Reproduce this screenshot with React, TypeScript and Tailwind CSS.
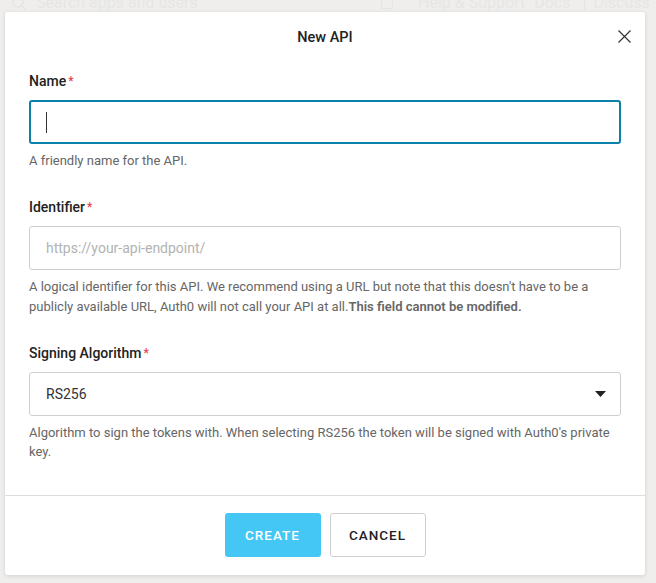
import React from 'react';

const font = { fontFamily: 'Roboto, "Liberation Sans", sans-serif' };

function Label({ children }: { children: React.ReactNode }) {
  return (
    <label className="block text-[14px] leading-5 font-medium text-[#222] mb-[9px]">
      {children}
      <span className="text-[#e5424d] ml-[2px] align-top text-[12px]">*</span>
    </label>
  );
}

function Help({ children }: { children: React.ReactNode }) {
  return <p className="mt-[7px] text-[13px] leading-5 text-[#666]">{children}</p>;
}

export default function App() {
  return (
    <div className="relative w-[656px] h-[583px] overflow-hidden bg-[#efeeed]" style={font}>
      {/* faded page behind the dialog */}
      <div className="flex items-center w-[720px] h-[12px] text-[16px] text-[#e7e6e4] -mt-[3px] whitespace-nowrap">
        <svg width="16" height="16" viewBox="0 0 16 16" className="ml-[11px] mr-[9px] shrink-0" fill="none" stroke="#e5e4e2" strokeWidth="1.5">
          <circle cx="7" cy="7" r="5" />
          <path d="M11 11l4 4" />
        </svg>
        <span className="w-[345px] shrink-0">Search apps and users</span>
        <span className="w-[12px] h-[12px] border border-[#e5e4e2] rounded-t-full shrink-0" />
        <span className="ml-[25px] shrink-0">Help &amp; Support</span>
        <span className="ml-[9px] shrink-0">Docs</span>
        <span className="ml-[14px] mr-[8px] h-[14px] border-l border-[#e5e4e2] shrink-0" />
        <span className="shrink-0">Discuss Your</span>
      </div>

      <div className="absolute left-[5px] top-[12px] w-[640px] h-[563px] bg-white rounded-[3px] shadow-[0_1px_4px_rgba(0,0,0,0.12)] flex flex-col">
        <div className="relative h-[50px] flex items-center justify-center">
          <h2 className="text-[14.5px] font-medium text-[#222] mt-[1px]">New API</h2>
          <button className="absolute right-[12px] top-[16px] p-[2px]">
            <svg width="13" height="13" viewBox="0 0 13 13" stroke="#333" strokeWidth="1.2" fill="none">
              <path d="M0.5 0.5l12 12M12.5 0.5l-12 12" />
            </svg>
          </button>
        </div>

        <div className="px-6 pt-[9px] flex-1">
          <Label>Name</Label>
          <div className="h-[44px] border-2 border-[#0a80aa] rounded-[3px] flex items-center pl-[15px]">
            <span className="w-px h-[21px] bg-[#333]" />
          </div>
          <Help>A friendly name for the API.</Help>

          <div className="mt-[26px]">
            <Label>Identifier</Label>
            <div className="h-[44px] border border-[#cfcfcf] rounded-[3px] flex items-center pl-4 text-[14px] text-[#b3b3b3]">
              https://your-api-endpoint/
            </div>
            <Help>
              A logical identifier for this API. We recommend using a URL but note that this doesn't have to be a publicly
              available URL, Auth0 will not call your API at all.
              <span className="font-semibold">This field cannot be modified.</span>
            </Help>
          </div>

          <div className="mt-[26px]">
            <Label>Signing Algorithm</Label>
            <div className="h-[44px] border border-[#cfcfcf] rounded-[3px] flex items-center pl-4 pr-[14px] text-[14px] text-[#333]">
              <span className="flex-1">RS256</span>
              <svg width="11" height="6" viewBox="0 0 11 6">
                <path d="M0 0h11L5.5 6z" fill="#222" />
              </svg>
            </div>
            <p className="mt-[7px] text-[13px] leading-[19px] text-[#666]">
              Algorithm to sign the tokens with. When selecting RS256 the token will be signed with Auth0's private key.
            </p>
          </div>
        </div>

        <div className="border-t border-[#dcdcdc] h-[80px] flex items-center justify-center gap-[9px] pb-[1px]">
          <button className="w-[96px] h-[44px] rounded-[3px] bg-[#44c7f4] text-white text-[13.5px] tracking-[1px] font-medium">
            CREATE
          </button>
          <button className="w-[96px] h-[44px] rounded-[3px] border border-[#cfcfcf] bg-white text-[#222] text-[13.5px] tracking-[1px] font-medium">
            CANCEL
          </button>
        </div>
      </div>
    </div>
  );
}
